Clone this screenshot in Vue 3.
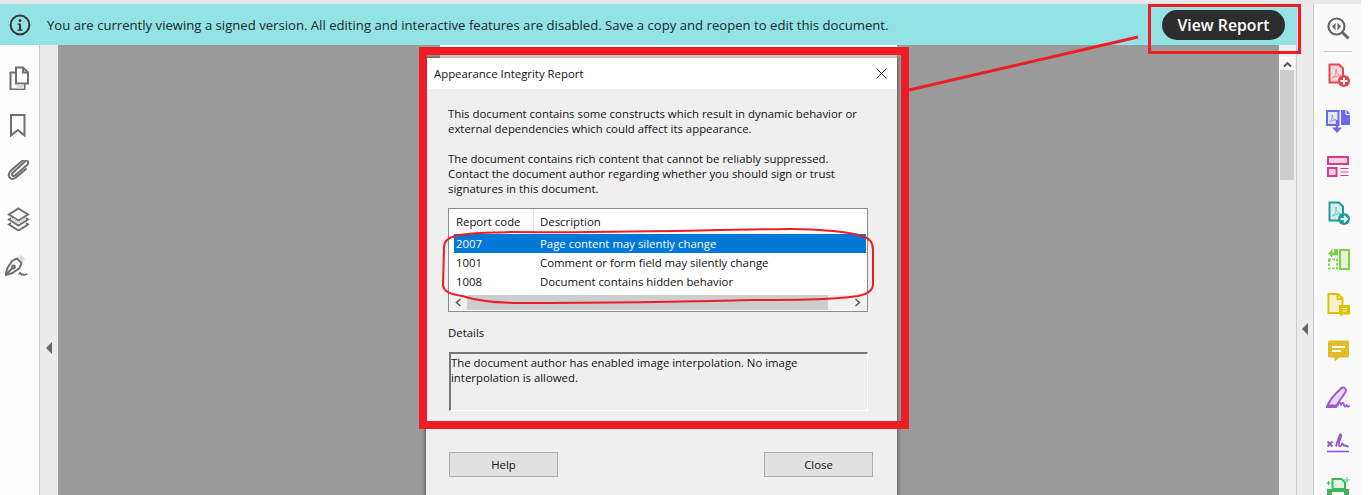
<script setup>
const rows = [
  { code: '2007', text: 'Page content may silently change', selected: true },
  { code: '1001', text: 'Comment or form field may silently change' },
  { code: '1008', text: 'Document contains hidden behavior' },
]
</script>

<template>
  <div class="app">
    <div class="workspace">
      <div class="banner">
        <svg class="info" width="24" height="24" viewBox="0 0 24 24">
          <circle cx="12" cy="12" r="9.4" fill="none" stroke="#333" stroke-width="2" />
          <circle cx="12" cy="7.6" r="1.4" fill="#333" />
          <path d="M9.6 10.4h3.4v6h1.6v1.4H9.4v-1.4H11v-4.6H9.6z" fill="#333" />
        </svg>
        <span class="banner-text">You are currently viewing a signed version. All editing and interactive features are disabled. Save a copy and reopen to edit this document.</span>
        <button class="view-report">View Report</button>
      </div>
      <div class="body">
        <aside class="left-rail">
          <svg width="24" height="24" viewBox="0 0 24 24" fill="none" stroke="#6f6f6f" stroke-width="2">
            <path d="M10 1.5h7l5 5v11h-12z" fill="#fff" />
            <path d="M17 1.5v5h5" />
            <path d="M10 6.5H4.500v17h14v-6" />
            <path d="M11 18.500h7v4h-7z" fill="#ddd" stroke="none" />
          </svg>
          <svg width="24" height="24" viewBox="0 0 24 24" fill="none" stroke="#6f6f6f" stroke-width="2">
            <path d="M5 2h13.500v20.500l-6.700-5.500-6.800 5.500z" />
          </svg>
          <svg width="24" height="24" viewBox="0 0 24 24" fill="none" stroke="#6f6f6f" stroke-width="2">
            <path d="M19 3.500 7 14.500c-2 2-.5 4.500 1.800 3.200L21 7c3-3-1-7-4-4.800L5 12.500c-5 5-.5 11 5 7l10-8.500" stroke-linecap="round" transform="translate(0 -2)" />
          </svg>
          <svg width="24" height="24" viewBox="0 0 24 24" fill="none" stroke="#6f6f6f" stroke-width="2">
            <path d="M12.500 1.500 22 7.500l-9.500 6-9.500-6z" />
            <path d="M5 11l-2 1.500 9.500 6 9.500-6-2-1.500" fill="none" />
            <path d="M5 16l-2 1.500 9.500 6 9.500-6-2-1.500" />
            <path d="M7 11l5.500 3.500L18 11l2 1.500-7.500 4.500L5 12.500z" fill="#ddd" stroke="none" />
          </svg>
          <svg width="24" height="24" viewBox="0 0 24 24" fill="none" stroke="#6f6f6f" stroke-width="2" class="pen">
            <path d="M12 4.500 16.500 9l-2 5-7 5-7 2 2-7 5-7.500z" fill="#fff" />
            <path d="M.5 21 7.500 14" />
            <circle cx="8.500" cy="13" r="1.400" />
            <path d="M13 3l3-2 4 4-2 3z" fill="#d8d8d8" stroke="none" />
            <path d="M14 20.500c1-3 2-2 2 0s2-2 2.500 0 1.500-1 4 0" stroke-width="1.500" />
          </svg>
        </aside>
        <div class="collapse-strip left-strip"><i class="tri"></i></div>
        <main class="document">
          <section class="dialog">
            <header class="dialog-title">
              <span>Appearance Integrity Report</span>
              <svg width="11" height="11" viewBox="0 0 11 11" stroke="#222" stroke-width="1"><path d="M.5.500l10 10M10.500.500l-10 10" /></svg>
            </header>
            <div class="dialog-body">
              <p class="para">This document contains some constructs which result in dynamic behavior or<br />external dependencies which could affect its appearance.</p>
              <p class="para second">The document contains rich content that cannot be reliably suppressed.<br />Contact the document author regarding whether you should sign or trust<br />signatures in this document.</p>
              <div class="table">
                <div class="thead">
                  <span class="col-code">Report code</span>
                  <span class="col-desc">Description</span>
                </div>
                <div v-for="r in rows" :key="r.code" class="row" :class="{ selected: r.selected }">
                  <span class="col-code">{{ r.code }}</span>
                  <span class="col-desc">{{ r.text }}</span>
                </div>
                <div class="hscroll">
                  <svg width="7" height="9" viewBox="0 0 7 9" fill="none" stroke="#555" stroke-width="1.500"><path d="M5.500 1 1.500 4.500l4 3.500" /></svg>
                  <div class="hthumb"></div>
                  <svg width="7" height="9" viewBox="0 0 7 9" fill="none" stroke="#555" stroke-width="1.500"><path d="M1.500 1l4 3.500-4 3.500" /></svg>
                </div>
              </div>
              <div class="details-label">Details</div>
              <div class="details">The document author has enabled image interpolation. No image<br />interpolation is allowed.</div>
              <div class="actions">
                <button class="dlg-btn">Help</button>
                <button class="dlg-btn">Close</button>
              </div>
            </div>
          </section>
        </main>
        <div class="vscroll">
          <div class="vscroll-up">
            <svg width="9" height="7" viewBox="0 0 9 7" fill="none" stroke="#555" stroke-width="1.800"><path d="M1 5.500l3.500-3.500 3.500 3.500" /></svg>
          </div>
          <div class="vthumb"></div>
        </div>
      </div>
    </div>
    <div class="collapse-strip right-strip"><i class="tri"></i></div>
    <aside class="right-rail">
      <div class="zoom-cell">
        <svg width="24" height="24" viewBox="0 0 24 24" fill="none" stroke="#666" stroke-width="2.200">
          <circle cx="10.500" cy="10.500" r="8" />
          <path d="M16.500 16.500 22.500 22.500" stroke-width="3" />
          <path d="M9.500 6.500v8l-3.500-4zM11.500 6.500v8l3.500-4z" fill="#666" stroke="none" />
        </svg>
      </div>
      <div class="rail-divider"></div>
      <div class="tool">
        <svg width="24" height="24" viewBox="0 0 24 24">
          <path d="M3.500 1.500h9.500l4 4v14h-13.500z" fill="#f8dadd" stroke="#e4434f" stroke-width="2" />
          <path d="M6.500 15c2-1 4-5 3.500-9 0 4 2 6 5 7-3 0-6 .5-8.500 2z" fill="none" stroke="#e98a92" stroke-width="1" />
          <circle cx="18" cy="18" r="6" fill="#e8404f" />
          <path d="M18 14.500v7M14.500 18h7" stroke="#fff" stroke-width="2" />
        </svg>
      </div>
      <div class="tool">
        <svg width="24" height="24" viewBox="0 0 24 24">
          <path d="M15 1h5.500l3.500 3.500V16H15z" fill="#6c6ae8" />
          <path d="M20 1v4.500h4" fill="none" stroke="#fff" stroke-width="1" />
          <path d="M1 2h11.500v14H1z" fill="#e6e6fb" stroke="#6c6ae8" stroke-width="2" />
          <path d="M3.500 13c1.500-1 3-3.500 2.500-7 0 3 1.500 4.500 4 5-2.500 0-4.500.5-6.500 2z" fill="none" stroke="#9a98ee" stroke-width="1" />
          <path d="M9.800 11h2.400v7.500h3.800L11 24l-5-5.500h3.800z" fill="#6c6ae8" />
        </svg>
      </div>
      <div class="tool">
        <svg width="24" height="24" viewBox="0 0 24 24">
          <rect x="2" y="2" width="20" height="7" fill="#f6d0e3" stroke="#db3a8c" stroke-width="2" />
          <rect x="2" y="13" width="8.500" height="8" fill="#f6d0e3" stroke="#db3a8c" stroke-width="2" />
          <path d="M14.500 13.500h8M14.500 17h8M14.500 20.500h8" stroke="#db3a8c" stroke-width="1.200" />
        </svg>
      </div>
      <div class="tool">
        <svg width="24" height="24" viewBox="0 0 24 24">
          <path d="M3.500 1.500h9.500l4 4v14h-13.500z" fill="#d5efef" stroke="#1f9c9e" stroke-width="2" />
          <path d="M6.500 15c2-1 4-5 3.500-9 0 4 2 6 5 7-3 0-6 .5-8.500 2z" fill="none" stroke="#6fbfc0" stroke-width="1" />
          <circle cx="18" cy="18" r="6" fill="#1f9c9e" />
          <path d="M14.500 18h6M18 15l3 3-3 3" fill="none" stroke="#fff" stroke-width="1.800" />
        </svg>
      </div>
      <div class="tool">
        <svg width="24" height="24" viewBox="0 0 24 24">
          <rect x="14" y="3" width="9" height="19" fill="#e4f5d4" stroke="#7fd14c" stroke-width="2" />
          <path d="M3 12.500v9h8v-9H3z" fill="none" stroke="#7fd14c" stroke-width="2" stroke-dasharray="2.500 1.500" />
          <path d="M8 2h4v6.500H6.500V11L2 6.500 6.500 2v3.500H8z" fill="#7fd14c" />
        </svg>
      </div>
      <div class="tool">
        <svg width="24" height="24" viewBox="0 0 24 24">
          <path d="M2.500 1h9.500l4.500 4.500V20H2.500z" fill="#f6efcb" stroke="#e3c000" stroke-width="2" />
          <path d="M11.500 1v5h5" fill="none" stroke="#e3c000" stroke-width="2" />
          <path d="M13 12h11v9.500h-7l-2.500 2.500v-2.500H13z" fill="#e3c000" />
          <path d="M16.500 15.500h4M16.500 18h4" stroke="#fff" stroke-width="1" />
        </svg>
      </div>
      <div class="tool">
        <svg width="24" height="24" viewBox="0 0 24 24">
          <path d="M3.500 1.500h18a1.500 1.500 0 0 1 1.500 1.500v14a1.500 1.500 0 0 1-1.500 1.500h-8l-5 4v-4h-5A1.500 1.500 0 0 1 2 17V3a1.500 1.500 0 0 1 1.500-1.500z" fill="#e2bb29" />
          <path d="M6 7h13v2H6zM6 11h9v2H6z" fill="#fff" />
        </svg>
      </div>
      <div class="tool">
        <svg width="24" height="24" viewBox="0 0 24 24" fill="none" stroke="#9b5bd8" stroke-width="2">
          <path d="M15 3.500c1.500-2 5-1 5 2 0 1-1 2-1.500 3L10.500 20.500H1.500c2.500-6 8-12 13.500-17z" fill="#ead9f7" />
          <path d="M0 22h11" />
          <path d="M11.500 21.500c.5-5 3-5 3.500-1 .5-3 2.500-3.500 3-.5.500 2.500 2 1.500 2.500-.5.500 2.500 2 2.500 3.500 1.500" stroke-width="1.800" />
        </svg>
      </div>
      <div class="tool">
        <svg width="24" height="24" viewBox="0 0 24 24" fill="none" stroke="#8f55d0" stroke-width="2">
          <path d="M1.500 10.500l5 5M6.500 10.500l-5 5" stroke-width="1.800" />
          <path d="M10 15.500c1-5 3-9 3.500-11 1-2 2.500-1 1.500 1.500-1 2.500-2.500 5-2 8 .5 2 2 1.500 3-1 1-2 1.500 3 3 1.500 1-1 1.500 2 3.500 0.500" stroke-width="1.800" />
          <path d="M1 20.500h22" stroke-width="1.600" />
        </svg>
      </div>
      <div class="tool">
        <svg width="24" height="24" viewBox="0 0 24 24">
          <path d="M6.500 2h9l3.500 3.500V12H6.500z" fill="#dff3e0" stroke="#3db65a" stroke-width="2" />
          <path d="M1 12h22v10H1z" fill="#3db65a" />
          <path d="M6 15h12v9H6z" fill="#fff" />
          <path d="M.5 6h4M2.500 4v4" stroke="#3db65a" stroke-width="1.200" />
          <path d="M21 0v6M18 3h6" stroke="#6ed08a" stroke-width="1.200" />
        </svg>
      </div>
    </aside>

    <svg class="annotations" width="1361" height="495" viewBox="0 0 1361 495" fill="none" stroke="#ee1c25">
      <rect x="423" y="51" width="482" height="374" stroke-width="8" />
      <rect x="1149.500" y="5.500" width="150" height="47" stroke-width="3" />
      <path d="M909 90 1138 37" stroke-width="3" />
      <path d="M444 250C443 242 447 238 455 236C470 232 490 233 510 232C600 233 700 230 790 229C820 229 850 232 862 236C870 238 873 243 873 250L873 284C873 290 868 294 858 296C830 300 790 300 750 300C680 302 600 303 520 303C490 303 475 300 462 296C450 294 444 292 443 285Z" stroke-width="2" />
    </svg>
  </div>
</template>

<style>
html, body { margin: 0; background: #fff; overflow: hidden; }
</style>

<style scoped>
.app {
  position: relative;
  width: 1361px;
  height: 495px;
  overflow: hidden;
  display: flex;
  box-sizing: border-box;
  padding-top: 4px;
  background: #fafafa;
  font-family: "Open Sans", "Noto Sans", sans-serif;
  color: #111;
}
.app::before {
  content: "";
  position: absolute;
  inset: 0 0 auto 0;
  height: 4px;
  background: #e8e8e8;
}
.workspace { width: 1296px; display: flex; flex-direction: column; flex: none; }
.banner {
  height: 41px;
  flex: none;
  background: #93e2e6;
  display: flex;
  align-items: center;
  box-sizing: border-box;
  padding: 0 11px 0 8px;
}
.info { flex: none; }
.banner-text {
  margin-left: 15px;
  font-size: 13.140px;
  color: #16282b;
  white-space: nowrap;
}
.view-report {
  margin-left: auto;
  height: 30px;
  width: 123px;
  padding: 0;
  border: 0;
  border-radius: 15px;
  background: #2d2d2d;
  color: #fff;
  font: 600 15.800px "Open Sans", sans-serif;
}
.body { flex: 1; display: flex; min-height: 0; }
.left-rail {
  width: 35px;
  padding-right: 4px;
  flex: none;
  background: #fdfdfd;
  border-right: 1px solid #cbcbcb;
  display: flex;
  flex-direction: column;
  align-items: center;
  gap: 23px;
  padding-top: 21px;
}
.pen { margin-left: -2px; }
.collapse-strip { background: #ebebeb; flex: none; box-sizing: border-box; display: flex; justify-content: center; }
.left-strip { width: 18px; padding-top: 297px; }
.right-strip { width: 18px; padding-top: 319px; padding-right: 1px; border-left: 1px solid #cbcbcb; border-right: 1px solid #cbcbcb; }
.tri {
  display: block;
  width: 0;
  height: 0;
  border-top: 6px solid transparent;
  border-bottom: 6px solid transparent;
  border-right: 6px solid #666;
}
.document { flex: 1; background: #9a9a9a; padding-left: 368px; padding-top: 13px; min-width: 0; }
.dialog {
  width: 471px;
  height: 470px;
  background: #efefef;
  box-shadow: 0 0 3px 1px rgba(0, 0, 0, 0.45);
  position: relative;
}
.dialog::before {
  content: "";
  position: absolute;
  top: -13px;
  left: 14px;
  right: 0;
  height: 13px;
  background: linear-gradient(#fff 10px, #c4c4c4 10px);
}
.dialog-title {
  height: 31px;
  background: #fff;
  box-sizing: border-box;
  padding: 0 10px 0 8px;
  display: flex;
  align-items: center;
  justify-content: space-between;
  font-size: 11.380px;
}
.dialog-body { padding: 0 28px 0 22px; font-size: 11.380px; line-height: 15px; }
.para { margin: 0; padding-top: 17px; white-space: nowrap; }
.para.second { padding-top: 15px; }
.table {
  margin-top: 12px;
  height: 104px;
  box-sizing: border-box;
  border: 1px solid #8a8a8a;
  background: #fff;
  width: 420px;
  padding: 0 1px 0 5px;
  display: flex;
  flex-direction: column;
}
.thead, .row { display: flex; align-items: center; white-space: nowrap; }
.thead { height: 25px; flex: none; }
.thead .col-desc { border-left: 1px solid #e3e3e3; margin-left: -1px; height: 25px; line-height: 25px; padding-left: 6px; }
.row { height: 19px; flex: none; }
.row.selected { background: #0078d7; color: #fff; }
.col-code { width: 80px; padding-left: 2px; box-sizing: border-box; flex: none; }
.col-desc { padding-left: 6px; }
.hscroll {
  margin: 4px 0 0 -5px;
  height: 15px;
  display: flex;
  align-items: center;
  background: #f0f0f0;
  width: 418px;
  padding: 0 6px;
  box-sizing: border-box;
  flex: none;
}
.hthumb { width: 363px; height: 15px; background: #cdcdcd; margin: 0 26px 0 5px; }
.details-label { margin-top: 13px; }
.details {
  margin-top: 12px;
  margin-left: 1px;
  width: 419px;
  height: 59px;
  box-sizing: border-box;
  border-style: solid;
  border-width: 2px 1px 1px 2px;
  border-color: #777 #fff #fff #777;
  padding: 1px 0 0 0;
  white-space: nowrap;
}
.actions { display: flex; justify-content: space-between; margin: 41px -4px 0 1px; }
.dlg-btn {
  width: 109px;
  height: 25px;
  padding: 0;
  background: #e1e1e1;
  border: 1px solid #adadad;
  font: 11.380px "Open Sans", sans-serif;
  color: #111;
}
.vscroll { width: 17px; flex: none; background: #efefef; box-sizing: border-box; padding-top: 12px; border-right: 1px solid transparent; }
.vscroll-up { height: 13px; background: #f7f7f7; display: flex; align-items: center; justify-content: center; border-top: 1px solid #fff; box-sizing: border-box; }
.vthumb { height: 110px; background: #cdcdcd; margin: 0 1px; }
.right-rail { flex: 1; display: flex; flex-direction: column; align-items: center; min-width: 0; background: #fafafa; }
.zoom-cell { height: 24px; flex: none; padding-top: 12px; }
.rail-divider { width: 28px; height: 1px; background: #ccc; margin-top: 11px; flex: none; }
.tool { height: 46px; flex: none; display: flex; align-items: center; }
.annotations { position: absolute; left: 0; top: 0; pointer-events: none; }
</style>
